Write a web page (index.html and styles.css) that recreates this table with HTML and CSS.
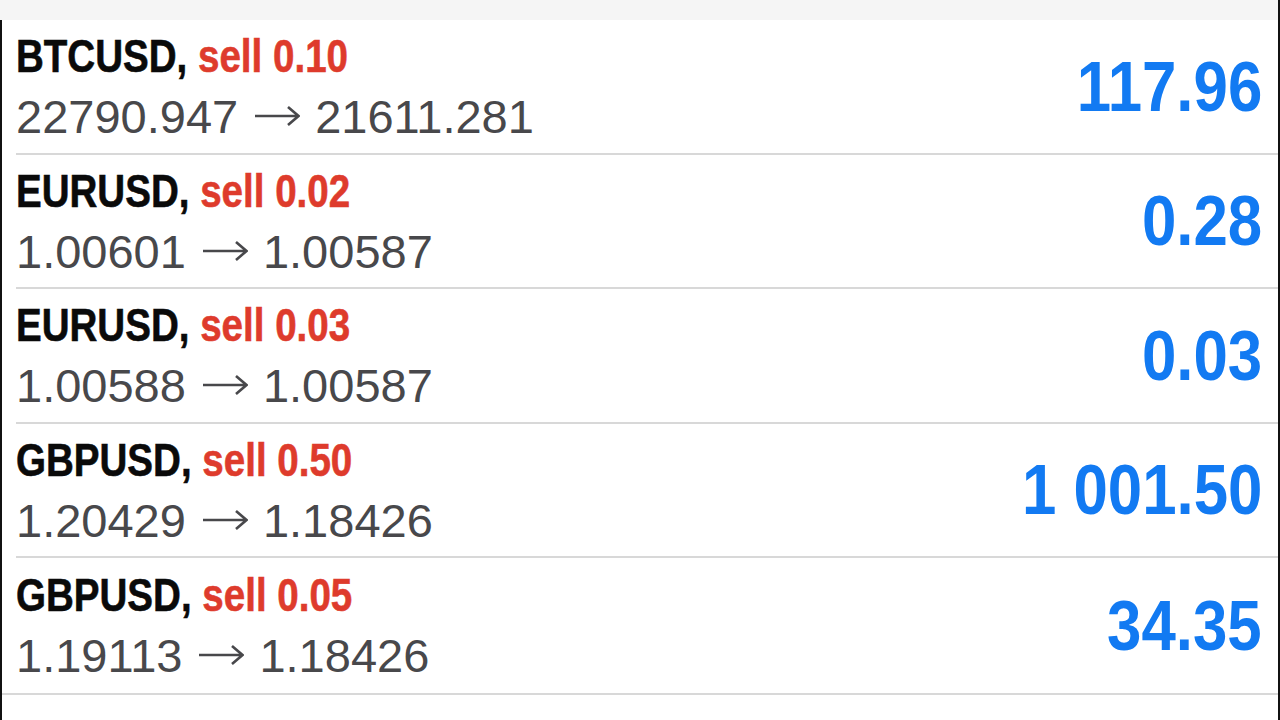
FILE: index.html
```html
<!DOCTYPE html>
<html>
<head>
  <title>Trades</title>
  <link rel="stylesheet" href="styles.css">
</head>
<body>
  <div class="topbar"></div>
  <div class="page">
    <div class="list">
      <div class="row">
        <div class="info">
          <div class="title"><span class="sym">BTCUSD,</span> <span class="sell">sell 0.10</span></div>
          <div class="prices">22790.947<svg class="arrow" width="46" height="24" viewBox="0 0 46 24"><path d="M1 12H44M34 3L44.5 12L34 21"/></svg>21611.281</div>
        </div>
        <div class="profit">117.96</div>
      </div>
      <div class="row">
        <div class="info">
          <div class="title"><span class="sym">EURUSD,</span> <span class="sell">sell 0.02</span></div>
          <div class="prices">1.00601<svg class="arrow" width="46" height="24" viewBox="0 0 46 24"><path d="M1 12H44M34 3L44.5 12L34 21"/></svg>1.00587</div>
        </div>
        <div class="profit">0.28</div>
      </div>
      <div class="row">
        <div class="info">
          <div class="title"><span class="sym">EURUSD,</span> <span class="sell">sell 0.03</span></div>
          <div class="prices">1.00588<svg class="arrow" width="46" height="24" viewBox="0 0 46 24"><path d="M1 12H44M34 3L44.5 12L34 21"/></svg>1.00587</div>
        </div>
        <div class="profit">0.03</div>
      </div>
      <div class="row">
        <div class="info">
          <div class="title"><span class="sym">GBPUSD,</span> <span class="sell">sell 0.50</span></div>
          <div class="prices">1.20429<svg class="arrow" width="46" height="24" viewBox="0 0 46 24"><path d="M1 12H44M34 3L44.5 12L34 21"/></svg>1.18426</div>
        </div>
        <div class="profit">1 001.50</div>
      </div>
      <div class="row">
        <div class="info">
          <div class="title"><span class="sym">GBPUSD,</span> <span class="sell">sell 0.05</span></div>
          <div class="prices">1.19113<svg class="arrow" width="46" height="24" viewBox="0 0 46 24"><path d="M1 12H44M34 3L44.5 12L34 21"/></svg>1.18426</div>
        </div>
        <div class="profit">34.35</div>
      </div>
    </div>
  </div>
</body>
</html>
```

FILE: styles.css
```css
body
{
  margin: 0;
  background-color: #fff;
  font-family: "Liberation Sans", Arial, sans-serif;
  overflow: hidden;
}
.topbar
{
  height: 20px;
  background-color: #f5f5f5;
  border-right: 2px solid #111;
}
.page
{
  height: 700px;
  border-left: 2px solid #111;
  border-right: 2px solid #111;
}
.list
{
  padding-left: 14px;
  border-bottom: 2px solid #d8d8d8;
}
.row
{
  display: flex;
  align-items: center;
  justify-content: space-between;
  height: 132.5px;
  padding-right: 16px;
  border-bottom: 2px solid #d8d8d8;
}
.row:last-child
{
  border-bottom: none;
  height: 134.5px;
}
.info
{
  display: flex;
  flex-direction: column;
}
.title
{
  display: inline-block;
  font-size: 47px;
  line-height: 61px;
  font-weight: bold;
  white-space: nowrap;
  transform: scaleX(0.82);
  transform-origin: left center;
  -webkit-text-stroke: 0.6px currentColor;
}
.sym
{
  color: #0a0a0a;
}
.sell
{
  color: #de3b2c;
}
.prices
{
  font-size: 47px;
  line-height: 61px;
  color: #48484b;
  white-space: nowrap;
}
.arrow
{
  margin: 0 15px 0 16px;
  vertical-align: 5px;
}
.arrow path
{
  fill: none;
  stroke: #48484b;
  stroke-width: 2.6;
}
.profit
{
  font-size: 71px;
  line-height: 71px;
  font-weight: bold;
  color: #127af2;
  white-space: nowrap;
  transform: scaleX(0.87);
  transform-origin: right center;
}
```
